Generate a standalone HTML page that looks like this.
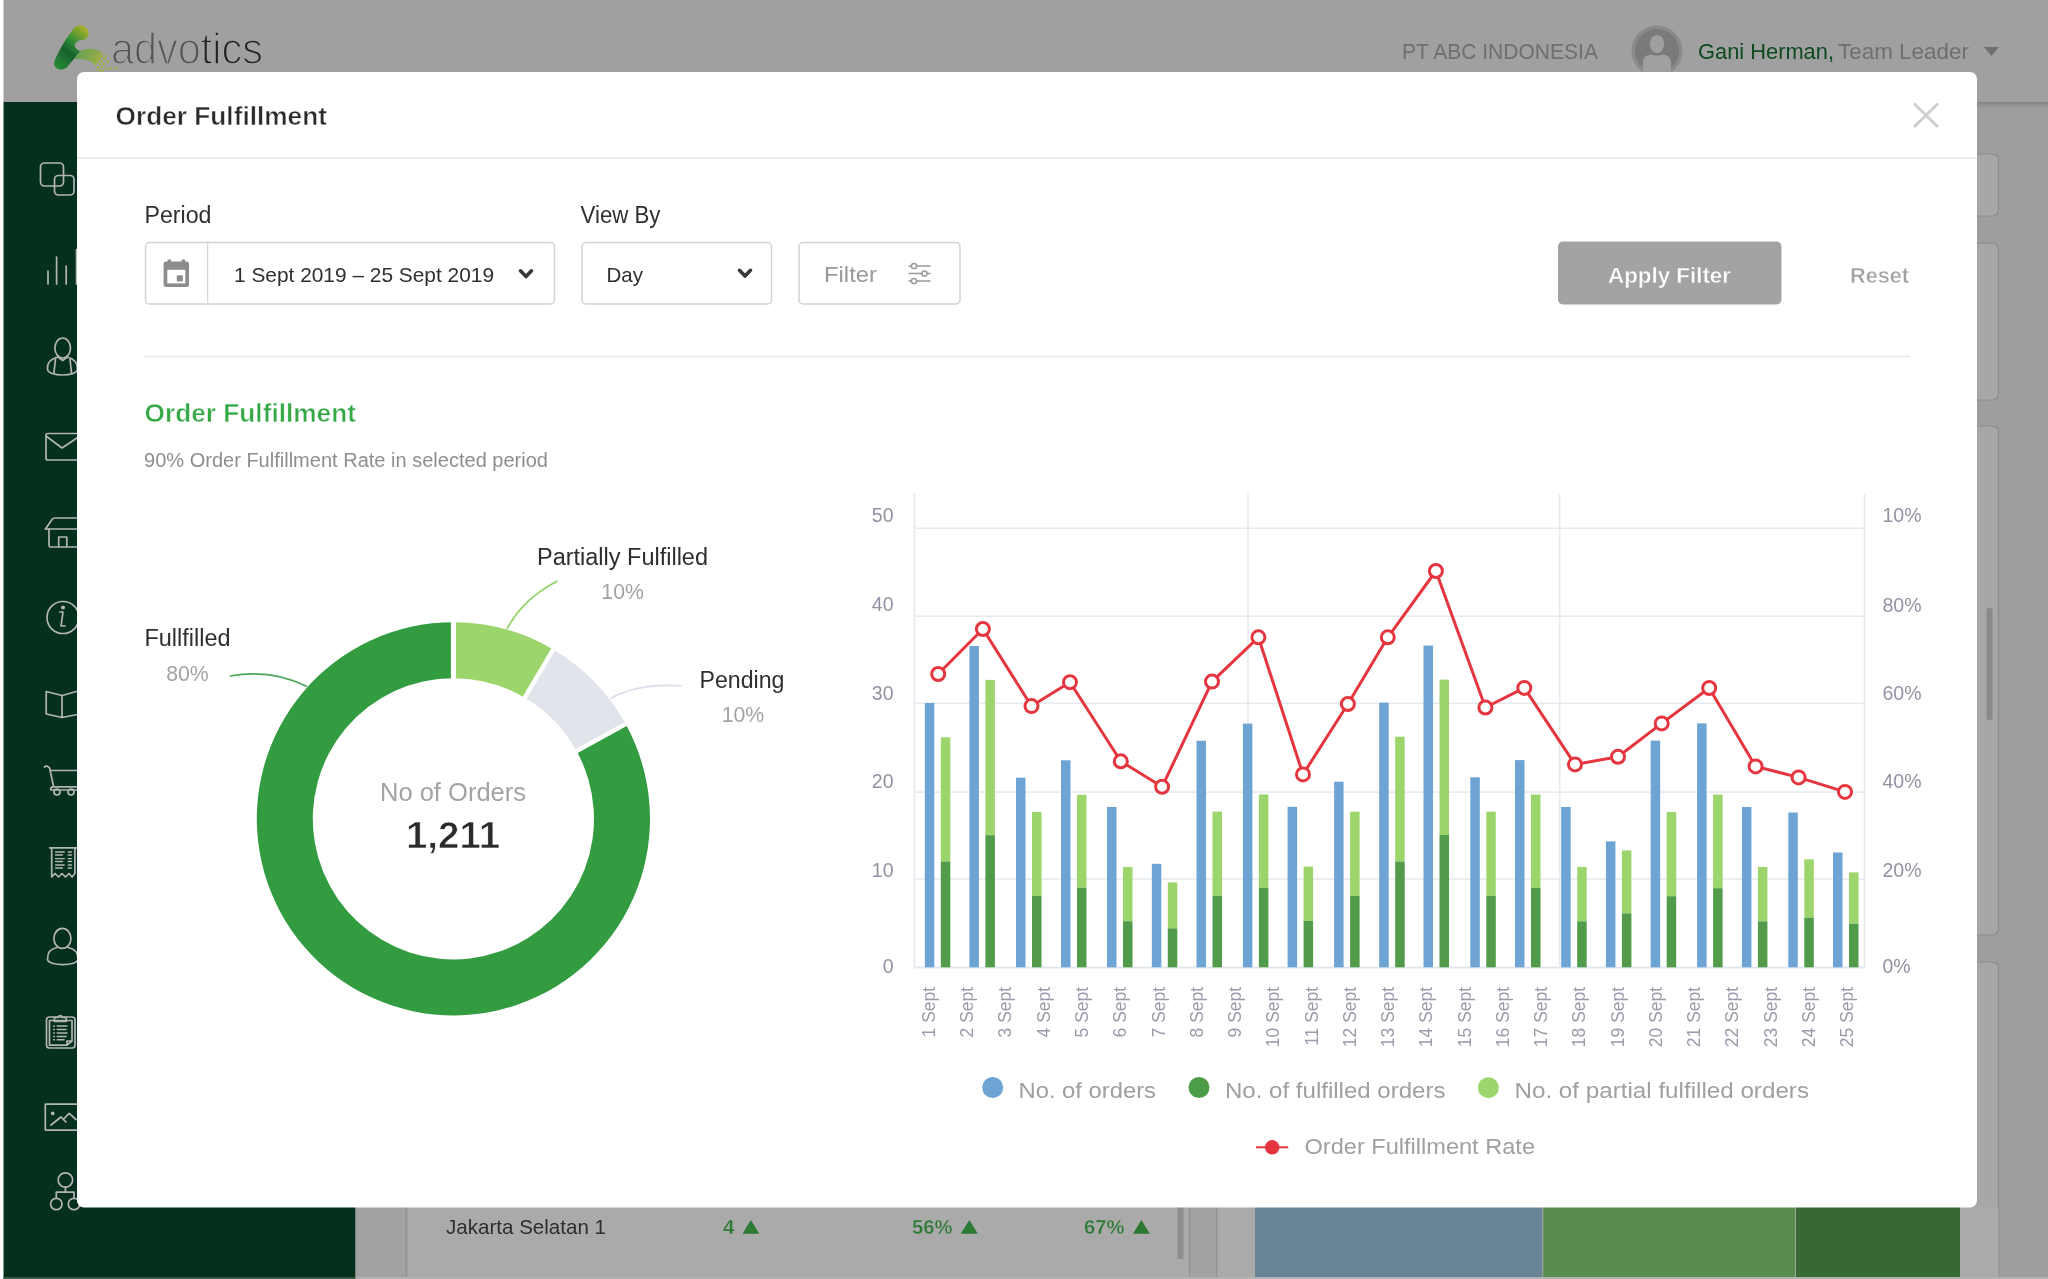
<!DOCTYPE html>
<html><head><meta charset="utf-8"><title>Order Fulfillment</title>
<style>html,body{margin:0;padding:0;width:2048px;height:1279px;overflow:hidden;background:#9b9c9b}
svg{display:block;font-family:"Liberation Sans", sans-serif;will-change:transform}</style></head>
<body><svg width="2048" height="1279" viewBox="0 0 2048 1279">
<defs>
<linearGradient id="hshadow" x1="0" y1="0" x2="0" y2="1"><stop offset="0" stop-color="#000" stop-opacity="0.16"/><stop offset="1" stop-color="#000" stop-opacity="0"/></linearGradient>
<linearGradient id="lg1" x1="0.1" y1="1" x2="0.75" y2="0"><stop offset="0" stop-color="#2a8e37"/><stop offset="0.42" stop-color="#17602c"/><stop offset="0.62" stop-color="#2b8a38"/><stop offset="1" stop-color="#a2ae2a"/></linearGradient>
<linearGradient id="lg2" x1="0" y1="0" x2="1" y2="0.3"><stop offset="0" stop-color="#4f9e4a"/><stop offset="1" stop-color="#9aae36"/></linearGradient>
</defs>
<rect x="0" y="0" width="2048" height="1279" fill="#9d9e9d"/>
<rect x="0" y="0" width="2048" height="102" fill="#9fa09f"/>
<rect x="0" y="102" width="2048" height="6" fill="url(#hshadow)"/>
<rect x="0" y="102" width="355.5" height="1177" fill="#05301e"/>
<rect x="0" y="0" width="3.5" height="1279" fill="#ffffff"/>
<rect x="1900" y="154" width="98.5" height="62" rx="6" fill="#a6a7a6" stroke="#8b8c8b" stroke-width="1.2"/>
<rect x="1900" y="243" width="98.5" height="157" rx="6" fill="#a6a7a6" stroke="#8b8c8b" stroke-width="1.2"/>
<rect x="1900" y="426" width="98.5" height="509" rx="6" fill="#a6a7a6" stroke="#8b8c8b" stroke-width="1.2"/>
<rect x="1900" y="962" width="98.5" height="338" rx="6" fill="#a6a7a6" stroke="#8b8c8b" stroke-width="1.2"/>
<rect x="1986.5" y="608" width="6" height="112" rx="2" fill="#8a8a8a"/>
<rect x="355.5" y="1207" width="51" height="72" fill="#a1a2a1"/>
<rect x="405.5" y="1207" width="2" height="72" fill="#939393"/>
<rect x="407.5" y="1207" width="782" height="72" fill="#aaaaaa"/>
<rect x="1177.5" y="1207" width="6" height="52" fill="#8e8e8e"/>
<rect x="1189" y="1207" width="1.5" height="72" fill="#939393"/>
<rect x="1190.5" y="1207" width="26" height="72" fill="#a2a3a2"/>
<rect x="1216" y="1207" width="1.5" height="72" fill="#939393"/>
<rect x="1217.5" y="1207" width="37.5" height="72" fill="#aaaaaa"/>
<rect x="1255" y="1207" width="287.5" height="72" fill="#688296"/>
<rect x="1542.3" y="1207" width="1" height="72" fill="#9aa89a"/>
<rect x="1543.3" y="1207" width="252" height="72" fill="#5a8c50"/>
<rect x="1795" y="1207" width="1" height="72" fill="#9aa89a"/>
<rect x="1796" y="1207" width="164" height="72" fill="#366933"/>
<rect x="1960" y="1207" width="39" height="72" fill="#aaaaaa"/>
<rect x="1998.5" y="1207" width="1.2" height="72" fill="#939393"/>
<rect x="355.5" y="1277" width="1700" height="2" fill="#b2b2b2"/>
<rect x="3.5" y="1277" width="352" height="2" fill="#3b5a48"/>
<text x="446" y="1234" font-size="20.6" fill="#2e2e2e" textLength="160" lengthAdjust="spacingAndGlyphs" >Jakarta Selatan 1</text>
<text x="723" y="1234" font-size="20.6" fill="#2a7a33" font-weight="bold" stroke="#aaaaaa" stroke-width="0.4">4</text>
<polygon points="742.5,1233.7 759.2,1233.7 750.85,1220" fill="#2a7a33"/>
<text x="912" y="1234" font-size="20.6" fill="#2a7a33" font-weight="bold" textLength="40.5" lengthAdjust="spacingAndGlyphs" stroke="#aaaaaa" stroke-width="0.4">56%</text>
<polygon points="960.8,1233.7 977.8,1233.7 969.3,1220" fill="#2a7a33"/>
<text x="1084" y="1234" font-size="20.6" fill="#2a7a33" font-weight="bold" textLength="40.5" lengthAdjust="spacingAndGlyphs" stroke="#aaaaaa" stroke-width="0.4">67%</text>
<polygon points="1133,1233.7 1149.8,1233.7 1141.4,1220" fill="#2a7a33"/>
<g>
<path d="M55,60 C58,52 68,35 73.5,29 C76,25.5 79,25 82,25.5 C86,26.5 89,30 88.7,34 C88.5,38 85,39.6 82,40 C79,40.3 76.5,41 75,44 C74.3,47 76.5,50.3 80.5,51 L68,66 C65,70 60,70.5 57,68.5 C54,66.5 53.5,63 55,60 Z" fill="url(#lg1)"/>
<path d="M80.5,51 C86,48 96,47.5 102.5,53 L103,57 C100,59 97,62 95.5,66 C92,61 87,58.5 74,59 Z" fill="url(#lg2)" opacity="0.85"/>
</g>
<rect x="104.8" y="55.4" width="2" height="2" fill="#a3b531"/>
<rect x="103.3" y="58.1" width="2" height="2" fill="#a3b531"/>
<rect x="106.9" y="60.9" width="2" height="2" fill="#a3b531"/>
<rect x="103" y="63.2" width="2" height="2" fill="#a3b531"/>
<rect x="98.6" y="63.2" width="2" height="2" fill="#a3b531"/>
<rect x="101" y="66" width="2" height="2" fill="#a3b531"/>
<rect x="96.7" y="66.7" width="2" height="2" fill="#a3b531"/>
<rect x="105.3" y="67.5" width="2" height="2" fill="#a3b531"/>
<rect x="109.6" y="67.1" width="2" height="2" fill="#a3b531"/>
<rect x="115.5" y="67.3" width="2" height="2" fill="#a3b531"/>
<rect x="98.3" y="69.5" width="2" height="2" fill="#a3b531"/>
<rect x="101.4" y="69.9" width="2" height="2" fill="#a3b531"/>
<rect x="100.5" y="60.5" width="2" height="2" fill="#a3b531"/>
<rect x="97" y="60" width="2" height="2" fill="#a3b531"/>
<text x="111" y="64" font-size="44" fill="#4a4b4a" stroke="#9fa09f" stroke-width="1.6" paint-order="fill" textLength="152" lengthAdjust="spacingAndGlyphs"><tspan fill="#555655">advo</tspan><tspan fill="#222">tics</tspan></text>
<text x="1402" y="59" font-size="21.5" fill="#6e6f6e" textLength="196" lengthAdjust="spacingAndGlyphs" >PT ABC INDONESIA</text>
<circle cx="1657" cy="51" r="25.4" fill="#898a8a"/>
<circle cx="1657" cy="51" r="22" fill="#797a7a"/>
<ellipse cx="1657" cy="44" rx="7.2" ry="9.1" fill="#9e9f9e"/>
<path d="M1642.8,75 V63.5 C1642.8,57.5 1646.5,54.5 1652,54.5 C1654,55.8 1660,55.8 1662,54.5 C1667.5,54.5 1671.2,57.5 1671.2,63.5 V75 Z" fill="#9e9f9e"/>
<text x="1698" y="59" font-size="22" fill="#0d4a20" textLength="136" lengthAdjust="spacingAndGlyphs" >Gani Herman,</text>
<text x="1838" y="59" font-size="22" fill="#6e6f6e" textLength="131" lengthAdjust="spacingAndGlyphs" >Team Leader</text>
<polygon points="1984,47 1999,47 1991.5,56" fill="#6e6f6e"/>
<g fill="none" stroke="#b3b5b3" stroke-width="1.7" stroke-linejoin="round" stroke-linecap="round">
<rect x="40.5" y="163" width="23" height="23" rx="4"/>
<rect x="54.5" y="175.5" width="19.5" height="19.5" rx="4"/>
<path d="M48,284 V271 M56.6,284 V257 M66.2,284 V266 M76.5,284 V249.5"/>
<ellipse cx="62.7" cy="348" rx="7.8" ry="10"/>
<path d="M47.5,369 C47,362 52,358.5 58,357 L62.7,360.5 L67.5,357 C73,358.5 77.5,362 77.5,369 C77.5,377 47.5,377 47.5,369 Z M55.5,359 L53.8,374 M70,359 L71.6,374"/>
<rect x="46" y="433.5" width="34" height="26.5" rx="2"/>
<path d="M46,436 L62,448 L80,436"/>
<path d="M45.5,529 L52,519.5 C52.8,518.3 53.5,518 55,518 H78 M49,529 V545.5 C49,546.5 49.5,547 50.5,547 H79 M58.7,547 V537 H66.8 V547"/>
<path d="M45.5,529 H80"/>
<circle cx="63" cy="617.5" r="16"/>
<path d="M60,612 H63 L61,626 H65"/>
<circle cx="63" cy="607.5" r="1.2" fill="#b3b5b3"/>
<path d="M46.2,691.5 L62,695.5 L80,690.5 M46.2,691.5 V714 L62,717.5 L80,714 M62,695.5 V717.5"/>
<path d="M44.5,767 C45.5,765.5 47.5,766 49.6,768 L53.6,786.8 C51,786.8 50,788.5 51,790 H80 M50.5,770.5 H80 M53.6,786.8 H80"/>
<circle cx="57" cy="792" r="3"/><circle cx="71" cy="792" r="3"/>
<path d="M49.6,847.8 H80 M51.7,847.8 V877 L55,873.5 L58.5,877 L62,873.5 L65.5,877 L69,873.5 L72,877 L74.9,873.5 V847.8"/>
<path d="M55.6,852 H64.2 M55.6,855 H62.5 M55.6,858.6 H64.2 M55.6,861.5 H62.5 M55.6,865 H64.2 M55.6,868 H62.5 M68.2,852 H71.4 M68.2,855 H71.4 M68.2,858.6 H71.4 M68.2,861.5 H71.4 M68.2,865 H71.4 M68.2,868 H71.4" stroke-width="1.4"/>
<ellipse cx="62.4" cy="938.4" rx="8.5" ry="10"/>
<path d="M57,947.5 C51,948.5 47.5,952 47.5,959 C47.5,966.5 78,966.5 78,959 C78,952 74,948.5 68,947.5"/>
<rect x="46.5" y="1017" width="28.5" height="31" rx="3"/>
<path d="M49.5,1020.5 H72 V1041 L67,1045.2 H49.5 Z M67,1045.2 V1041 H72"/>
<path d="M54.4,1021.4 V1017.5 H58 C58.5,1015 62,1015 62.5,1017.5 H66.2 V1021.4 Z"/>
<path d="M57.2,1026 H67 M57.2,1029.6 H66 M57.2,1033 H67 M57.2,1036.5 H66 M57.2,1039.8 H64 M53.6,1026 H54.4 M53.6,1029.6 H54.4 M53.6,1033 H54.4 M53.6,1036.5 H54.4 M53.6,1039.8 H54.4" stroke-width="1.5"/>
<rect x="45.3" y="1104.2" width="34" height="26" rx="0.5"/>
<path d="M51,1125 L61,1117 L66,1122 M63.2,1119.5 L69.2,1113.4 L76,1119.5"/>
<circle cx="52.7" cy="1113.4" r="1" fill="#b3b5b3"/>
<circle cx="65.4" cy="1180" r="7.2"/>
<path d="M65.4,1187.2 V1192.2 M56.3,1192.2 H74 M56.3,1192.2 V1198 M74,1192.2 V1198"/>
<circle cx="56.3" cy="1204" r="5.7"/><circle cx="74" cy="1204" r="5.7"/>
</g>
<rect x="77" y="72" width="1900" height="1135.5" rx="7" fill="#ffffff"/>
<rect x="77" y="157.5" width="1900" height="1.3" fill="#e6e6e6"/>
<text x="115.5" y="125" font-size="26.5" fill="#2b2b2b" font-weight="bold" textLength="211.5" lengthAdjust="spacingAndGlyphs" stroke="#fff" stroke-width="0.5">Order Fulfillment</text>
<path d="M1914,103.5 L1938,127 M1938,103.5 L1914,127" stroke="#cfcfcf" stroke-width="3" fill="none"/>
<text x="144.5" y="222.5" font-size="23" fill="#2f2f2f" textLength="67" lengthAdjust="spacingAndGlyphs" >Period</text>
<text x="580.5" y="222.5" font-size="23" fill="#2f2f2f" textLength="80" lengthAdjust="spacingAndGlyphs" >View By</text>
<rect x="145.5" y="242.5" width="409" height="61.5" rx="4" fill="#fff" stroke="#d2d2d2" stroke-width="1.5"/>
<rect x="207" y="243" width="1.3" height="61" fill="#d8d8d8"/>
<g fill="#8c8c8c"><rect x="163.6" y="261.5" width="25.4" height="25.4" rx="2.5"/><rect x="167.6" y="259.5" width="3.4" height="4"/><rect x="181.6" y="259.5" width="3.4" height="4"/></g>
<rect x="167.3" y="269.8" width="18" height="13.6" fill="#fff"/>
<rect x="176.8" y="275.4" width="6" height="6" fill="#8c8c8c"/>
<text x="234" y="281.5" font-size="21" fill="#2f2f2f" textLength="260" lengthAdjust="spacingAndGlyphs" >1 Sept 2019 – 25 Sept 2019</text>
<path d="M520.5,270.8 L526,276.6 L531.5,270.8" stroke="#3a3a3a" stroke-width="3.6" fill="none" stroke-linecap="round" stroke-linejoin="round"/>
<rect x="582" y="242.5" width="189.5" height="61.5" rx="4" fill="#fff" stroke="#d2d2d2" stroke-width="1.5"/>
<text x="606.5" y="281.5" font-size="21" fill="#2f2f2f" textLength="36.5" lengthAdjust="spacingAndGlyphs" >Day</text>
<path d="M739.5,270.3 L745,276.1 L750.5,270.3" stroke="#3a3a3a" stroke-width="3.6" fill="none" stroke-linecap="round" stroke-linejoin="round"/>
<rect x="799" y="242.5" width="161" height="61.5" rx="4" fill="#fff" stroke="#d2d2d2" stroke-width="1.5"/>
<text x="824" y="281.5" font-size="22" fill="#9a9a9a" textLength="53" lengthAdjust="spacingAndGlyphs" >Filter</text>
<g stroke="#999" stroke-width="1.6" fill="none"><path d="M908.5,266 H930.5 M908.5,273.5 H930.5 M908.5,281 H930.5"/></g>
<g stroke="#999" stroke-width="1.5" fill="#fff"><circle cx="914" cy="266" r="2.6"/><circle cx="924.5" cy="273.5" r="2.6"/><circle cx="914" cy="281" r="2.6"/></g>
<rect x="1558" y="241.5" width="223.5" height="63" rx="5" fill="#a3a3a3"/>
<text x="1608" y="283" font-size="22.5" fill="#ffffff" font-weight="bold" textLength="123" lengthAdjust="spacingAndGlyphs" stroke="#a3a3a3" stroke-width="0.45">Apply Filter</text>
<text x="1850" y="283" font-size="22.5" fill="#a1a1a1" font-weight="bold" textLength="59" lengthAdjust="spacingAndGlyphs" stroke="#fff" stroke-width="0.45">Reset</text>
<rect x="144.5" y="355.8" width="1765.5" height="1.3" fill="#e6e6e6"/>
<text x="144.5" y="422" font-size="26.5" fill="#35a846" font-weight="bold" textLength="211.5" lengthAdjust="spacingAndGlyphs" stroke="#fff" stroke-width="0.5">Order Fulfillment</text>
<text x="144" y="466.7" font-size="19.5" fill="#8e8e8e" textLength="404" lengthAdjust="spacingAndGlyphs" >90% Order Fulfillment Rate in selected period</text>
<path d="M453.40,622.20 A196.6,196.6 0 0 1 553.18,649.40 L524.76,697.65 A140.6,140.6 0 0 0 453.40,678.20 Z" fill="#9cd56c"/>
<path d="M553.18,649.40 A196.6,196.6 0 0 1 625.68,724.09 L576.61,751.07 A140.6,140.6 0 0 0 524.76,697.65 Z" fill="#e1e4eb"/>
<path d="M625.68,724.09 A196.6,196.6 0 1 1 453.40,622.20 L453.40,678.20 A140.6,140.6 0 1 0 576.61,751.07 Z" fill="#339c41"/>
<line x1="453.40" y1="681.20" x2="453.40" y2="619.20" stroke="#fff" stroke-width="5"/>
<line x1="523.24" y1="700.24" x2="554.70" y2="646.82" stroke="#fff" stroke-width="4.4"/>
<line x1="573.98" y1="752.51" x2="628.31" y2="722.64" stroke="#fff" stroke-width="4.4"/>
<path d="M230,676 C252,672 280,673 307,686.5" stroke="#4ba556" stroke-width="1.7" fill="none"/>
<path d="M557.5,581 C536,592 518,608 507,629" stroke="#8fd464" stroke-width="1.7" fill="none"/>
<path d="M681.5,686 C656,684 630,688 610.5,698.5" stroke="#dcdfe9" stroke-width="1.7" fill="none"/>
<text x="144.5" y="645.6" font-size="23" fill="#2e2e2e" textLength="86" lengthAdjust="spacingAndGlyphs" >Fullfilled</text>
<text x="187.5" y="680.8" font-size="22" fill="#a3a3a3" text-anchor="middle" textLength="42.5" lengthAdjust="spacingAndGlyphs" >80%</text>
<text x="537" y="564.5" font-size="23" fill="#2e2e2e" textLength="171" lengthAdjust="spacingAndGlyphs" >Partially Fulfilled</text>
<text x="622.6" y="599.3" font-size="22" fill="#a3a3a3" text-anchor="middle" textLength="42.5" lengthAdjust="spacingAndGlyphs" >10%</text>
<text x="699.5" y="687.6" font-size="23" fill="#2e2e2e" textLength="85" lengthAdjust="spacingAndGlyphs" >Pending</text>
<text x="743" y="722" font-size="22" fill="#a3a3a3" text-anchor="middle" textLength="42.5" lengthAdjust="spacingAndGlyphs" >10%</text>
<text x="453" y="801" font-size="25" fill="#a3a3a3" text-anchor="middle" textLength="146" lengthAdjust="spacingAndGlyphs" >No of Orders</text>
<text x="453" y="848" font-size="37.5" fill="#2b2b2b" font-weight="bold" text-anchor="middle" textLength="94" lengthAdjust="spacingAndGlyphs" stroke="#fff" stroke-width="0.7">1,211</text>
<rect x="915" y="527.55" width="949" height="1.5" fill="#e4eaf0"/>
<rect x="915" y="615.45" width="949" height="1.5" fill="#e4eaf0"/>
<rect x="915" y="702.55" width="949" height="1.5" fill="#e4eaf0"/>
<rect x="915" y="791.35" width="949" height="1.5" fill="#e4eaf0"/>
<rect x="915" y="878.35" width="949" height="1.5" fill="#e4eaf0"/>
<rect x="914" y="966.6" width="951" height="1.8" fill="#dfe6ee"/>
<rect x="913.7" y="494" width="1.6" height="474" fill="#e4eaf0"/>
<rect x="1247.2" y="494" width="1.6" height="474" fill="#e4eaf0"/>
<rect x="1558.9" y="494" width="1.6" height="474" fill="#e4eaf0"/>
<rect x="1863.7" y="494" width="1.6" height="474" fill="#e4eaf0"/>
<text x="893.5" y="521.7" font-size="19.5" fill="#9192a3" text-anchor="end" >50</text>
<text x="893.5" y="610.8" font-size="19.5" fill="#9192a3" text-anchor="end" >40</text>
<text x="893.5" y="699.5" font-size="19.5" fill="#9192a3" text-anchor="end" >30</text>
<text x="893.5" y="788" font-size="19.5" fill="#9192a3" text-anchor="end" >20</text>
<text x="893.5" y="877" font-size="19.5" fill="#9192a3" text-anchor="end" >10</text>
<text x="893.5" y="973" font-size="19.5" fill="#9192a3" text-anchor="end" >0</text>
<text x="1882.5" y="521.6" font-size="19.5" fill="#9192a3" >10%</text>
<text x="1882.5" y="611.6" font-size="19.5" fill="#9192a3" >80%</text>
<text x="1882.5" y="699.8" font-size="19.5" fill="#9192a3" >60%</text>
<text x="1882.5" y="787.6" font-size="19.5" fill="#9192a3" >40%</text>
<text x="1882.5" y="877.3" font-size="19.5" fill="#9192a3" >20%</text>
<text x="1882.5" y="972.5" font-size="19.5" fill="#9192a3" >0%</text>
<rect x="924.8" y="703" width="9.5" height="264.3" fill="#6ea4d3"/>
<rect x="940.8" y="737.3" width="9.5" height="124.2" fill="#9cd56c"/>
<rect x="940.8" y="861.5" width="9.5" height="105.8" fill="#529b4a"/>
<rect x="969.4" y="646" width="9.5" height="321.3" fill="#6ea4d3"/>
<rect x="985.4" y="679.9" width="9.5" height="155.3" fill="#9cd56c"/>
<rect x="985.4" y="835.2" width="9.5" height="132.1" fill="#529b4a"/>
<rect x="1016.0" y="777.7" width="9.5" height="189.6" fill="#6ea4d3"/>
<rect x="1032.0" y="811.9" width="9.5" height="84.1" fill="#9cd56c"/>
<rect x="1032.0" y="896" width="9.5" height="71.3" fill="#529b4a"/>
<rect x="1061.0" y="760.3" width="9.5" height="207.0" fill="#6ea4d3"/>
<rect x="1077.0" y="794.8" width="9.5" height="92.9" fill="#9cd56c"/>
<rect x="1077.0" y="887.7" width="9.5" height="79.6" fill="#529b4a"/>
<rect x="1107.0" y="807" width="9.5" height="160.3" fill="#6ea4d3"/>
<rect x="1123.0" y="867" width="9.5" height="54.2" fill="#9cd56c"/>
<rect x="1123.0" y="921.2" width="9.5" height="46.1" fill="#529b4a"/>
<rect x="1151.8" y="863.8" width="9.5" height="103.5" fill="#6ea4d3"/>
<rect x="1167.8" y="882.4" width="9.5" height="46.0" fill="#9cd56c"/>
<rect x="1167.8" y="928.4" width="9.5" height="38.9" fill="#529b4a"/>
<rect x="1196.5" y="740.8" width="9.5" height="226.5" fill="#6ea4d3"/>
<rect x="1212.5" y="811.6" width="9.5" height="84.2" fill="#9cd56c"/>
<rect x="1212.5" y="895.8" width="9.5" height="71.5" fill="#529b4a"/>
<rect x="1242.9" y="723.6" width="9.5" height="243.7" fill="#6ea4d3"/>
<rect x="1258.9" y="794.4" width="9.5" height="93.5" fill="#9cd56c"/>
<rect x="1258.9" y="887.9" width="9.5" height="79.4" fill="#529b4a"/>
<rect x="1287.6" y="806.8" width="9.5" height="160.5" fill="#6ea4d3"/>
<rect x="1303.6" y="866.6" width="9.5" height="54.3" fill="#9cd56c"/>
<rect x="1303.6" y="920.9" width="9.5" height="46.4" fill="#529b4a"/>
<rect x="1334.1" y="781.7" width="9.5" height="185.6" fill="#6ea4d3"/>
<rect x="1350.1" y="811.7" width="9.5" height="84.2" fill="#9cd56c"/>
<rect x="1350.1" y="895.9" width="9.5" height="71.4" fill="#529b4a"/>
<rect x="1379.2" y="702.7" width="9.5" height="264.6" fill="#6ea4d3"/>
<rect x="1395.2" y="736.7" width="9.5" height="124.8" fill="#9cd56c"/>
<rect x="1395.2" y="861.5" width="9.5" height="105.8" fill="#529b4a"/>
<rect x="1423.5" y="645.6" width="9.5" height="321.7" fill="#6ea4d3"/>
<rect x="1439.5" y="679.6" width="9.5" height="155.4" fill="#9cd56c"/>
<rect x="1439.5" y="835" width="9.5" height="132.3" fill="#529b4a"/>
<rect x="1470.3" y="777.3" width="9.5" height="190.0" fill="#6ea4d3"/>
<rect x="1486.3" y="811.7" width="9.5" height="84.2" fill="#9cd56c"/>
<rect x="1486.3" y="895.9" width="9.5" height="71.4" fill="#529b4a"/>
<rect x="1515.0" y="760.1" width="9.5" height="207.2" fill="#6ea4d3"/>
<rect x="1531.0" y="794.5" width="9.5" height="93.5" fill="#9cd56c"/>
<rect x="1531.0" y="888" width="9.5" height="79.3" fill="#529b4a"/>
<rect x="1561.2" y="807" width="9.5" height="160.3" fill="#6ea4d3"/>
<rect x="1577.2" y="866.9" width="9.5" height="54.4" fill="#9cd56c"/>
<rect x="1577.2" y="921.3" width="9.5" height="46.0" fill="#529b4a"/>
<rect x="1605.9" y="841.4" width="9.5" height="125.9" fill="#6ea4d3"/>
<rect x="1621.9" y="850.4" width="9.5" height="63.0" fill="#9cd56c"/>
<rect x="1621.9" y="913.4" width="9.5" height="53.9" fill="#529b4a"/>
<rect x="1650.7" y="740.6" width="9.5" height="226.7" fill="#6ea4d3"/>
<rect x="1666.7" y="811.9" width="9.5" height="84.3" fill="#9cd56c"/>
<rect x="1666.7" y="896.2" width="9.5" height="71.1" fill="#529b4a"/>
<rect x="1697.1" y="723.4" width="9.5" height="243.9" fill="#6ea4d3"/>
<rect x="1713.1" y="794.6" width="9.5" height="93.6" fill="#9cd56c"/>
<rect x="1713.1" y="888.2" width="9.5" height="79.1" fill="#529b4a"/>
<rect x="1741.9" y="807" width="9.5" height="160.3" fill="#6ea4d3"/>
<rect x="1757.9" y="866.9" width="9.5" height="54.4" fill="#9cd56c"/>
<rect x="1757.9" y="921.3" width="9.5" height="46.0" fill="#529b4a"/>
<rect x="1788.3" y="812.5" width="9.5" height="154.8" fill="#6ea4d3"/>
<rect x="1804.3" y="859.3" width="9.5" height="58.5" fill="#9cd56c"/>
<rect x="1804.3" y="917.8" width="9.5" height="49.5" fill="#529b4a"/>
<rect x="1833.0" y="852.5" width="9.5" height="114.8" fill="#6ea4d3"/>
<rect x="1849.0" y="872.4" width="9.5" height="51.3" fill="#9cd56c"/>
<rect x="1849.0" y="923.7" width="9.5" height="43.6" fill="#529b4a"/>
<polyline points="938.2,674 982.9,629 1031.5,706.1 1070,682.2 1120.8,761.3 1162.1,786.8 1212,681.6 1258.4,637.3 1303,774.4 1347.9,704 1387.8,637.3 1435.9,571 1485.4,707.5 1524.3,687.9 1575,764.4 1618,756.8 1661.7,723.4 1709.2,688 1755.6,766.4 1798.6,777.4 1845,791.9" fill="none" stroke="#e5353f" stroke-width="3" stroke-linejoin="round"/>
<circle cx="938.2" cy="674" r="6.5" fill="#fff" stroke="#e5353f" stroke-width="3"/>
<circle cx="982.9" cy="629" r="6.5" fill="#fff" stroke="#e5353f" stroke-width="3"/>
<circle cx="1031.5" cy="706.1" r="6.5" fill="#fff" stroke="#e5353f" stroke-width="3"/>
<circle cx="1070" cy="682.2" r="6.5" fill="#fff" stroke="#e5353f" stroke-width="3"/>
<circle cx="1120.8" cy="761.3" r="6.5" fill="#fff" stroke="#e5353f" stroke-width="3"/>
<circle cx="1162.1" cy="786.8" r="6.5" fill="#fff" stroke="#e5353f" stroke-width="3"/>
<circle cx="1212" cy="681.6" r="6.5" fill="#fff" stroke="#e5353f" stroke-width="3"/>
<circle cx="1258.4" cy="637.3" r="6.5" fill="#fff" stroke="#e5353f" stroke-width="3"/>
<circle cx="1303" cy="774.4" r="6.5" fill="#fff" stroke="#e5353f" stroke-width="3"/>
<circle cx="1347.9" cy="704" r="6.5" fill="#fff" stroke="#e5353f" stroke-width="3"/>
<circle cx="1387.8" cy="637.3" r="6.5" fill="#fff" stroke="#e5353f" stroke-width="3"/>
<circle cx="1435.9" cy="571" r="6.5" fill="#fff" stroke="#e5353f" stroke-width="3"/>
<circle cx="1485.4" cy="707.5" r="6.5" fill="#fff" stroke="#e5353f" stroke-width="3"/>
<circle cx="1524.3" cy="687.9" r="6.5" fill="#fff" stroke="#e5353f" stroke-width="3"/>
<circle cx="1575" cy="764.4" r="6.5" fill="#fff" stroke="#e5353f" stroke-width="3"/>
<circle cx="1618" cy="756.8" r="6.5" fill="#fff" stroke="#e5353f" stroke-width="3"/>
<circle cx="1661.7" cy="723.4" r="6.5" fill="#fff" stroke="#e5353f" stroke-width="3"/>
<circle cx="1709.2" cy="688" r="6.5" fill="#fff" stroke="#e5353f" stroke-width="3"/>
<circle cx="1755.6" cy="766.4" r="6.5" fill="#fff" stroke="#e5353f" stroke-width="3"/>
<circle cx="1798.6" cy="777.4" r="6.5" fill="#fff" stroke="#e5353f" stroke-width="3"/>
<circle cx="1845" cy="791.9" r="6.5" fill="#fff" stroke="#e5353f" stroke-width="3"/>
<text x="0" y="0" font-size="17.5" fill="#9a9aab" text-anchor="end" transform="translate(934.9,986.8) rotate(-90)">1 Sept</text>
<text x="0" y="0" font-size="17.5" fill="#9a9aab" text-anchor="end" transform="translate(973.2,986.8) rotate(-90)">2 Sept</text>
<text x="0" y="0" font-size="17.5" fill="#9a9aab" text-anchor="end" transform="translate(1011.4,986.8) rotate(-90)">3 Sept</text>
<text x="0" y="0" font-size="17.5" fill="#9a9aab" text-anchor="end" transform="translate(1049.7,986.8) rotate(-90)">4 Sept</text>
<text x="0" y="0" font-size="17.5" fill="#9a9aab" text-anchor="end" transform="translate(1087.9,986.8) rotate(-90)">5 Sept</text>
<text x="0" y="0" font-size="17.5" fill="#9a9aab" text-anchor="end" transform="translate(1126.2,986.8) rotate(-90)">6 Sept</text>
<text x="0" y="0" font-size="17.5" fill="#9a9aab" text-anchor="end" transform="translate(1164.5,986.8) rotate(-90)">7 Sept</text>
<text x="0" y="0" font-size="17.5" fill="#9a9aab" text-anchor="end" transform="translate(1202.7,986.8) rotate(-90)">8 Sept</text>
<text x="0" y="0" font-size="17.5" fill="#9a9aab" text-anchor="end" transform="translate(1241.0,986.8) rotate(-90)">9 Sept</text>
<text x="0" y="0" font-size="17.5" fill="#9a9aab" text-anchor="end" transform="translate(1279.2,986.8) rotate(-90)">10 Sept</text>
<text x="0" y="0" font-size="17.5" fill="#9a9aab" text-anchor="end" transform="translate(1317.5,986.8) rotate(-90)">11 Sept</text>
<text x="0" y="0" font-size="17.5" fill="#9a9aab" text-anchor="end" transform="translate(1355.8,986.8) rotate(-90)">12 Sept</text>
<text x="0" y="0" font-size="17.5" fill="#9a9aab" text-anchor="end" transform="translate(1394.0,986.8) rotate(-90)">13 Sept</text>
<text x="0" y="0" font-size="17.5" fill="#9a9aab" text-anchor="end" transform="translate(1432.3,986.8) rotate(-90)">14 Sept</text>
<text x="0" y="0" font-size="17.5" fill="#9a9aab" text-anchor="end" transform="translate(1470.5,986.8) rotate(-90)">15 Sept</text>
<text x="0" y="0" font-size="17.5" fill="#9a9aab" text-anchor="end" transform="translate(1508.8,986.8) rotate(-90)">16 Sept</text>
<text x="0" y="0" font-size="17.5" fill="#9a9aab" text-anchor="end" transform="translate(1547.1,986.8) rotate(-90)">17 Sept</text>
<text x="0" y="0" font-size="17.5" fill="#9a9aab" text-anchor="end" transform="translate(1585.3,986.8) rotate(-90)">18 Sept</text>
<text x="0" y="0" font-size="17.5" fill="#9a9aab" text-anchor="end" transform="translate(1623.6,986.8) rotate(-90)">19 Sept</text>
<text x="0" y="0" font-size="17.5" fill="#9a9aab" text-anchor="end" transform="translate(1661.8,986.8) rotate(-90)">20 Sept</text>
<text x="0" y="0" font-size="17.5" fill="#9a9aab" text-anchor="end" transform="translate(1700.1,986.8) rotate(-90)">21 Sept</text>
<text x="0" y="0" font-size="17.5" fill="#9a9aab" text-anchor="end" transform="translate(1738.4,986.8) rotate(-90)">22 Sept</text>
<text x="0" y="0" font-size="17.5" fill="#9a9aab" text-anchor="end" transform="translate(1776.6,986.8) rotate(-90)">23 Sept</text>
<text x="0" y="0" font-size="17.5" fill="#9a9aab" text-anchor="end" transform="translate(1814.9,986.8) rotate(-90)">24 Sept</text>
<text x="0" y="0" font-size="17.5" fill="#9a9aab" text-anchor="end" transform="translate(1853.1,986.8) rotate(-90)">25 Sept</text>
<circle cx="992.7" cy="1087.5" r="10.5" fill="#6ea4d3"/>
<text x="1018.5" y="1097.8" font-size="22.4" fill="#a0a0a0" textLength="137.5" lengthAdjust="spacingAndGlyphs" >No. of orders</text>
<circle cx="1199" cy="1087.5" r="10.5" fill="#4c9c48"/>
<text x="1225" y="1097.8" font-size="22.4" fill="#a0a0a0" textLength="220.5" lengthAdjust="spacingAndGlyphs" >No. of fulfilled orders</text>
<circle cx="1488.4" cy="1087.7" r="10.5" fill="#9cd56c"/>
<text x="1514.5" y="1097.8" font-size="22.4" fill="#a0a0a0" textLength="294.5" lengthAdjust="spacingAndGlyphs" >No. of partial fulfilled orders</text>
<rect x="1256" y="1146.3" width="32.2" height="2" fill="#e5353f"/>
<circle cx="1272.2" cy="1147.3" r="7.2" fill="#e5353f"/>
<text x="1304.5" y="1153.8" font-size="22.4" fill="#a0a0a0" textLength="230.5" lengthAdjust="spacingAndGlyphs" >Order Fulfillment Rate</text>
</svg></body></html>
